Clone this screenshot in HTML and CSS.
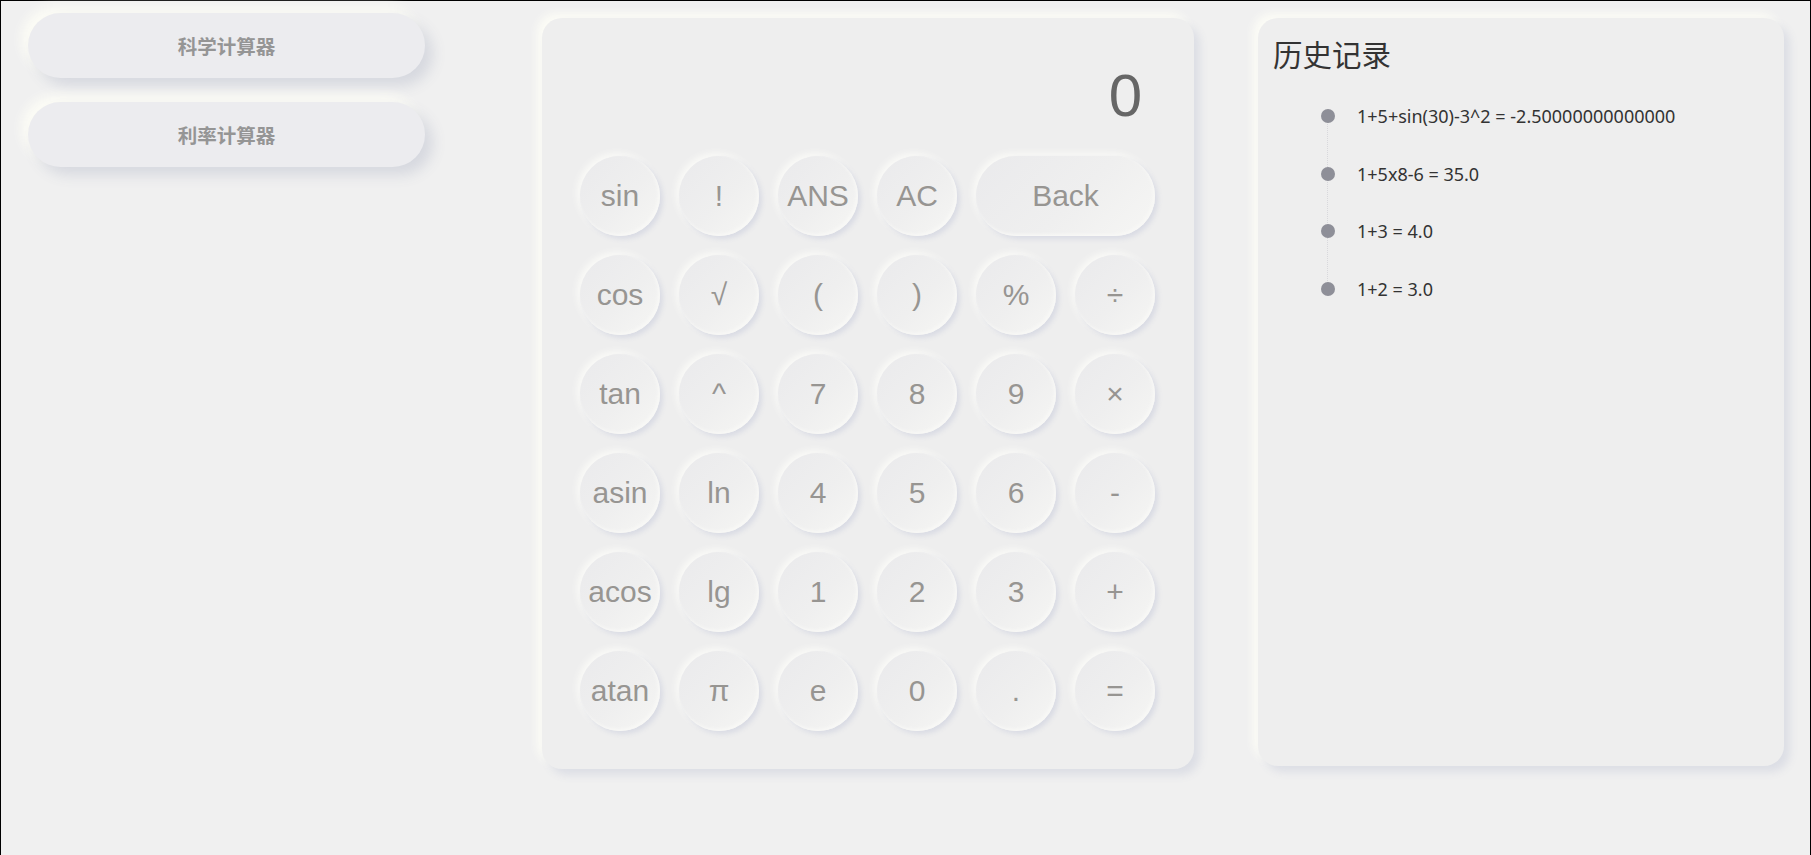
FILE: index.html
```html
<!DOCTYPE html>
<html lang="zh-CN">
<head>
    <meta charset="UTF-8">
    <meta name="viewport" content="width=device-width, initial-scale=1.0">
    <title>科学计算器</title>
    <link rel="stylesheet" href="styles.css">
</head>

<body>
    <div class="page">
        <nav class="side">
            <button class="side-btn">科学计算器</button>
            <button class="side-btn">利率计算器</button>
        </nav>

        <main class="calc">
            <div class="display" id="display">0</div>
            <div class="keys">
                <button class="key">sin</button>
                <button class="key">!</button>
                <button class="key">ANS</button>
                <button class="key">AC</button>
                <button class="key wide">Back</button>

                <button class="key">cos</button>
                <button class="key">√</button>
                <button class="key">(</button>
                <button class="key">)</button>
                <button class="key">%</button>
                <button class="key">÷</button>

                <button class="key">tan</button>
                <button class="key">^</button>
                <button class="key">7</button>
                <button class="key">8</button>
                <button class="key">9</button>
                <button class="key">×</button>

                <button class="key">asin</button>
                <button class="key">ln</button>
                <button class="key">4</button>
                <button class="key">5</button>
                <button class="key">6</button>
                <button class="key">-</button>

                <button class="key">acos</button>
                <button class="key">lg</button>
                <button class="key">1</button>
                <button class="key">2</button>
                <button class="key">3</button>
                <button class="key">+</button>

                <button class="key">atan</button>
                <button class="key">π</button>
                <button class="key">e</button>
                <button class="key">0</button>
                <button class="key">.</button>
                <button class="key">=</button>
            </div>
        </main>

        <aside class="history">
            <h2>历史记录</h2>
            <ul class="history-list">
                <li>1+5+sin(30)-3^2 = -2.50000000000000</li>
                <li>1+5x8-6 = 35.0</li>
                <li>1+3 = 4.0</li>
                <li>1+2 = 3.0</li>
            </ul>
        </aside>
    </div>
</body>
</html>
```

FILE: styles.css
```css
html, body {
    margin: 0;
    padding: 0;
}

body {
    background: #f0f0f0;
    font-family: "Liberation Sans", Arial, sans-serif;
}

.page {
    box-sizing: border-box;
    min-height: 100vh;
    border: 1px solid #000;
    border-bottom: none;
    padding: 12px 26px 0 27px;
    display: flex;
    align-items: flex-start;
}

/* left menu */
.side {
    width: 397px;
    display: flex;
    flex-direction: column;
    gap: 24px;
}

.side-btn {
    height: 65px;
    border: none;
    border-radius: 33px;
    background: #ececef;
    color: #959595;
    font-family: "Noto Sans CJK SC", sans-serif;
    font-size: 19.5px;
    font-weight: bold;
    cursor: pointer;
    box-shadow: 8px 8px 14px #d6d8df, -6px -6px 12px #fdfdf6;
}

/* calculator */
.calc {
    box-sizing: border-box;
    width: 652px;
    margin: 5px 0 0 117px;
    padding: 0 39px 38px 38px;
    background: #eeeeee;
    border-radius: 20px;
    box-shadow: 6px 6px 8px #dcdee5, -5px -5px 9px #fcfcf6;
}

.display {
    box-sizing: border-box;
    height: 138px;
    padding: 36px 13px 0 0;
    line-height: 84px;
    font-size: 60px;
    color: #666;
    text-align: right;
}

.keys {
    display: grid;
    grid-template-columns: repeat(6, 80px);
    grid-auto-rows: 80px;
    gap: 19px;
}

.key {
    border: none;
    border-radius: 40px;
    padding: 0;
    font-family: "Liberation Sans", Arial, sans-serif;
    font-size: 30px;
    color: #979592;
    cursor: pointer;
    background: linear-gradient(135deg, #eaeaec 0%, #efefef 55%, #f6f6f4 100%);
    box-shadow: 3px 3px 5px #d9dbe4, -3px -3px 6px #fafaf7, inset -2px -2px 3px #f8f8f6;
}

.key.wide {
    grid-column: span 2;
}

/* history */
.history {
    box-sizing: border-box;
    width: 526px;
    height: 748px;
    margin: 5px 0 0 64px;
    padding: 15px;
    background: #eeeeee;
    border-radius: 20px;
    box-shadow: 6px 6px 8px #dcdee5, -5px -5px 9px #fcfcf6;
}

.history h2 {
    margin: 0;
    font-family: "Noto Sans CJK SC", sans-serif;
    font-size: 29.5px;
    font-weight: normal;
    line-height: 40px;
    color: #333;
}

.history-list {
    position: relative;
    list-style: none;
    margin: 14px 0 0;
    padding: 0 0 0 48px;
}

.history-list::before {
    content: "";
    position: absolute;
    left: 54px;
    top: 29px;
    bottom: 29px;
    border-left: 1px dotted #d8d8dc;
}

.history-list li {
    position: relative;
    display: flex;
    align-items: center;
    height: 57.8px;
    font-family: "Noto Sans", "Noto Sans CJK SC", sans-serif;
    font-size: 18px;
    color: #333;
}

.history-list li::before {
    content: "";
    width: 14px;
    height: 14px;
    margin-right: 22px;
    border-radius: 50%;
    background: #8e8f98;
    flex-shrink: 0;
}
```
